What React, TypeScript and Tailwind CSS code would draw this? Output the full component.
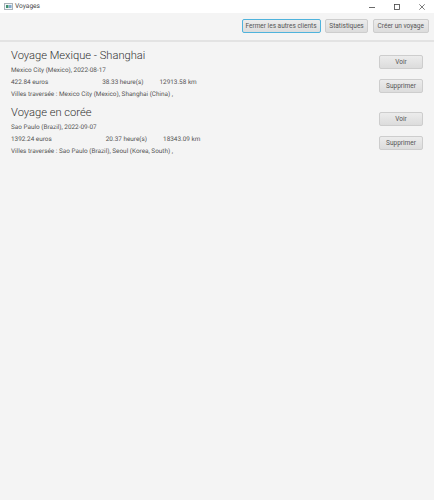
import React from 'react';

const voyages = [
  {
    title: 'Voyage Mexique - Shanghai',
    start: 'Mexico City (Mexico), 2022-08-17',
    price: '422.84 euros',
    duration: '38.33 heure(s)',
    distance: '12913.58 km',
    cities: 'Villes traversée : Mexico City (Mexico), Shanghai (China) ,',
  },
  {
    title: 'Voyage en corée',
    start: 'Sao Paulo (Brazil), 2022-09-07',
    price: '1392.24 euros',
    duration: '20.37 heure(s)',
    distance: '18343.09 km',
    cities: 'Villes traversée : Sao Paulo (Brazil), Seoul (Korea, South) ,',
  },
];

const FxButton: React.FC<{ label: string; className?: string; focused?: boolean }> = ({ label, className, focused }) => (
  <button
    className={`h-[14px] flex items-center justify-center whitespace-nowrap rounded-[2px] bg-gradient-to-b from-[#ececec] to-[#dcdcdc] text-[6.5px] leading-none text-[#555] border ${
      focused ? 'border-[#4fb3dc]' : 'border-[#cdcdcd]'
    } ${className ?? ''}`}
  >
    {label}
  </button>
);

export default function App() {
  return (
    <div className="w-[434px] h-[500px] flex flex-col overflow-hidden bg-[#f4f4f4] text-[#555] [text-rendering:geometricPrecision] font-['Roboto','Noto_Sans',sans-serif]">
      {/* Title bar */}
      <div className="h-[13px] bg-white flex items-center justify-between shrink-0">
        <div className="flex items-center">
          <svg className="ml-[4px] w-[9px] h-[7px]" viewBox="0 0 9 7">
            <rect x="0.5" y="0.5" width="8" height="6" fill="#f2f5f7" stroke="#a9b2b9" strokeWidth="1" />
            <rect x="2" y="2" width="2.5" height="3" fill="#3f8f6f" />
            <rect x="5" y="2" width="2.5" height="3" fill="#7fa8cf" />
          </svg>
          <span className="ml-[2px] text-[6.6px] leading-none text-[#444]">Voyages</span>
        </div>
        <div className="flex items-center text-[#444]">
          <svg className="w-[6px] h-[6px] mr-[19px]" viewBox="0 0 6 6">
            <path d="M0 3.5H6" stroke="currentColor" strokeWidth="0.8" />
          </svg>
          <svg className="w-[6px] h-[6px] mr-[19px]" viewBox="0 0 6 6">
            <rect x="0.5" y="0.5" width="5" height="5" fill="none" stroke="currentColor" strokeWidth="0.8" />
          </svg>
          <svg className="w-[6px] h-[6px] mr-[9px]" viewBox="0 0 6 6">
            <path d="M0.3 0.3L5.7 5.7M5.7 0.3L0.3 5.7" stroke="currentColor" strokeWidth="0.7" />
          </svg>
        </div>
      </div>

      {/* Toolbar */}
      <div className="h-[29px] shrink-0 border-b-2 border-[#e3e3e3] flex items-center justify-end gap-[4.5px] pr-[5px] pb-[1px]">
        <FxButton label="Fermer les autres clients" focused className="w-[79px]" />
        <FxButton label="Statistiques" className="w-[43px]" />
        <FxButton label="Créer un voyage" className="w-[56.5px]" />
      </div>

      {/* Voyages list */}
      <div className="pt-[6px] flex flex-col">
        {voyages.map((v) => (
          <div key={v.title} className="h-[57px] flex justify-between pl-[11px] pr-[11px]">
            <div className="flex flex-col">
              <div className="h-[16px] flex items-center text-[11.15px] font-light leading-none text-[#333]">{v.title}</div>
              <div className="h-[12px] flex items-center text-[6.4px] leading-none">{v.start}</div>
              <div className="h-[12px] flex items-center text-[6.4px] leading-none">
                <span className="mr-[54px]">{v.price}</span>
                <span className="mr-[16px]">{v.duration}</span>
                <span>{v.distance}</span>
              </div>
              <div className="h-[12px] flex items-center text-[6.4px] leading-none">{v.cities}</div>
            </div>
            <div className="flex flex-col gap-[10px] pt-[7px]">
              <FxButton label="Voir" className="w-[44px]" />
              <FxButton label="Supprimer" className="w-[44px]" />
            </div>
          </div>
        ))}
      </div>
    </div>
  );
}
